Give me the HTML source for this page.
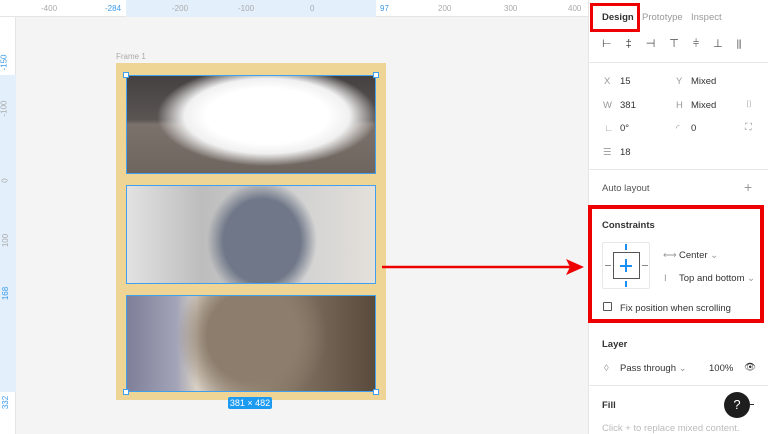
<!DOCTYPE html>
<html><head><meta charset="utf-8"><style>
*{margin:0;padding:0;box-sizing:border-box}
body{width:768px;height:434px;overflow:hidden;background:#f4f4f4;font-family:"Liberation Sans",sans-serif;position:relative}
.a{position:absolute}
.t{font-size:9.5px;color:#333;position:absolute}
.g{color:#999}
.rl{font-size:8px;color:#aaa;position:absolute}
</style></head><body>
<div class="a" style="left:0;top:0;width:588px;height:17px;background:#fff;border-bottom:1px solid #e5e5e5"></div>
<div class="a" style="left:126px;top:0;width:250px;height:17px;background:#e3f0fc"></div>
<div class="rl" style="left:41px;top:4px">-400</div>
<div class="rl" style="left:105px;top:4px;color:#3c9ae8">-284</div>
<div class="rl" style="left:172px;top:4px">-200</div>
<div class="rl" style="left:238px;top:4px">-100</div>
<div class="rl" style="left:310px;top:4px">0</div>
<div class="rl" style="left:380px;top:4px;color:#3c9ae8">97</div>
<div class="rl" style="left:438px;top:4px">200</div>
<div class="rl" style="left:504px;top:4px">300</div>
<div class="rl" style="left:568px;top:4px">400</div>
<div class="a" style="left:0;top:17px;width:16px;height:417px;background:#fff;border-right:1px solid #e5e5e5"></div>
<div class="a" style="left:0;top:75px;width:16px;height:317px;background:#e3f0fc"></div>
<div class="rl" style="left:-4px;top:58px;transform:rotate(-90deg);color:#3c9ae8">-150</div>
<div class="rl" style="left:-4px;top:104px;transform:rotate(-90deg)">-100</div>
<div class="rl" style="left:3px;top:176px;transform:rotate(-90deg)">0</div>
<div class="rl" style="left:-1px;top:236px;transform:rotate(-90deg)">100</div>
<div class="rl" style="left:-1px;top:289px;transform:rotate(-90deg);color:#3c9ae8">168</div>
<div class="rl" style="left:-1px;top:398px;transform:rotate(-90deg);color:#3c9ae8">332</div>
<div class="a" style="left:116px;top:52px;font-size:8px;color:#aaa">Frame 1</div>
<div class="a" style="left:116px;top:63px;width:270px;height:337px;background:#efd595"></div>
<div class="a" style="left:126px;top:75px;width:250px;height:99px;background:radial-gradient(ellipse 110px 50px at 140px 40px,#fff 55%,#f0f0f0 75%,transparent 100%),linear-gradient(#454141 0,#5a5553 45%,#7c726c 50%,#6e655f 100%);border:1px solid #3fa0f0"></div>
<div class="a" style="left:126px;top:185px;width:250px;height:99px;background:radial-gradient(ellipse 55px 60px at 135px 55px,#6f7788 70%,transparent 100%),linear-gradient(90deg,#e2e2e2,#bdbdbd 30%,#d2d2d2 70%,#e4e0da);border:1px solid #3fa0f0"></div>
<div class="a" style="left:126px;top:295px;width:250px;height:97px;background:radial-gradient(ellipse 75px 75px at 125px 40px,#8d7d6c 60%,transparent 100%),linear-gradient(90deg,#7e7f98,#a3a4b8 20%,#d8d0c4 28%,#8a7a6a 60%,#5a4a3c);border:1px solid #3fa0f0"></div>
<div class="a" style="left:123px;top:72px;width:6px;height:6px;background:#fff;border:1px solid #3fa0f0"></div>
<div class="a" style="left:373px;top:72px;width:6px;height:6px;background:#fff;border:1px solid #3fa0f0"></div>
<div class="a" style="left:123px;top:389px;width:6px;height:6px;background:#fff;border:1px solid #3fa0f0"></div>
<div class="a" style="left:373px;top:389px;width:6px;height:6px;background:#fff;border:1px solid #3fa0f0"></div>
<div class="a" style="left:228px;top:397px;width:44px;height:12px;background:#1d9bf0;border-radius:2px;color:#fff;font-size:9px;text-align:center;line-height:12px">381 × 482</div>
<svg class="a" style="left:380px;top:257px" width="210" height="20"><line x1="2" y1="10" x2="190" y2="10" stroke="#e00" stroke-width="2.5"/><polygon points="186,2 204,10 186,18 190,10" fill="#e00"/></svg>
<div class="a" style="left:588px;top:0;width:180px;height:434px;background:#fff;border-left:1px solid #e5e5e5"></div>
<div class="a" style="left:590px;top:3px;width:50px;height:29px;border:3px solid #e00"></div>
<div class="t" style="left:602px;top:12px;font-weight:bold">Design</div>
<div class="t g" style="left:642px;top:12px">Prototype</div>
<div class="t g" style="left:691px;top:12px">Inspect</div>
<div class="t" style="left:602px;top:37px;font-size:11px;letter-spacing:14px;color:#444">⊢‡⊣⊤⫩⊥⫴</div>
<div class="a" style="left:588px;top:62px;width:180px;border-top:1px solid #e8e8e8"></div>
<div class="t g" style="left:604px;top:76px">X</div><div class="t" style="left:620px;top:76px">15</div>
<div class="t g" style="left:676px;top:76px">Y</div><div class="t" style="left:691px;top:76px">Mixed</div>
<div class="t g" style="left:603px;top:100px">W</div><div class="t" style="left:620px;top:100px">381</div>
<div class="t g" style="left:676px;top:100px">H</div><div class="t" style="left:691px;top:100px">Mixed</div>
<div class="t g" style="left:746px;top:99px">⌷</div>
<div class="t g" style="left:604px;top:123px">∟</div><div class="t" style="left:620px;top:123px">0°</div>
<div class="t g" style="left:676px;top:123px">◜</div><div class="t" style="left:691px;top:123px">0</div>
<div class="t g" style="left:745px;top:122px">⛶</div>
<div class="t g" style="left:603px;top:147px">☰</div><div class="t" style="left:620px;top:147px">18</div>
<div class="a" style="left:588px;top:169px;width:180px;border-top:1px solid #e8e8e8"></div>
<div class="t" style="left:602px;top:183px;color:#555">Auto layout</div>
<div class="t g" style="left:744px;top:179px;font-size:14px">+</div>
<div class="a" style="left:588px;top:205px;width:176px;height:118px;border:4px solid #e00"></div>
<div class="t" style="left:602px;top:220px;font-weight:bold">Constraints</div>
<div class="a" style="left:602px;top:242px;width:48px;height:47px;border:1px solid #e8e8e8;border-radius:2px"></div>
<div class="a" style="left:613px;top:252px;width:27px;height:27px;border:1px solid #555"></div>
<div class="a" style="left:625px;top:244px;width:2px;height:6px;background:#1d8ff0"></div>
<div class="a" style="left:625px;top:281px;width:2px;height:6px;background:#1d8ff0"></div>
<div class="a" style="left:605px;top:265px;width:6px;height:1px;background:#888"></div>
<div class="a" style="left:642px;top:265px;width:6px;height:1px;background:#888"></div>
<div class="a" style="left:620px;top:265px;width:12px;height:2px;background:#1d8ff0"></div>
<div class="a" style="left:625px;top:259px;width:2px;height:13px;background:#1d8ff0"></div>
<div class="t g" style="left:663px;top:250px">⟷</div><div class="t" style="left:679px;top:250px">Center <span class="g">⌄</span></div>
<div class="t g" style="left:664px;top:273px">I</div><div class="t" style="left:679px;top:273px">Top and bottom <span class="g">⌄</span></div>
<div class="a" style="left:603px;top:302px;width:9px;height:9px;border:1px solid #555;border-radius:1px"></div>
<div class="t" style="left:620px;top:303px">Fix position when scrolling</div>
<div class="t" style="left:602px;top:339px;font-weight:bold">Layer</div>
<div class="t g" style="left:604px;top:363px">◊</div>
<div class="t" style="left:620px;top:363px">Pass through <span class="g">⌄</span></div>
<div class="t" style="left:709px;top:363px">100%</div>
<div class="t" style="left:744px;top:362px">👁</div>
<div class="a" style="left:588px;top:385px;width:180px;border-top:1px solid #e8e8e8"></div>
<div class="t" style="left:602px;top:400px;font-weight:bold">Fill</div>
<div class="a" style="left:744px;top:404px;width:10px;height:1px;background:#333"></div>
<div class="a" style="left:724px;top:392px;width:26px;height:26px;border-radius:50%;background:#1e1e1e;color:#fff;font-size:13px;text-align:center;line-height:26px">?</div>
<div class="t" style="left:602px;top:423px;color:#bbb">Click + to replace mixed content.</div>
</body></html>
